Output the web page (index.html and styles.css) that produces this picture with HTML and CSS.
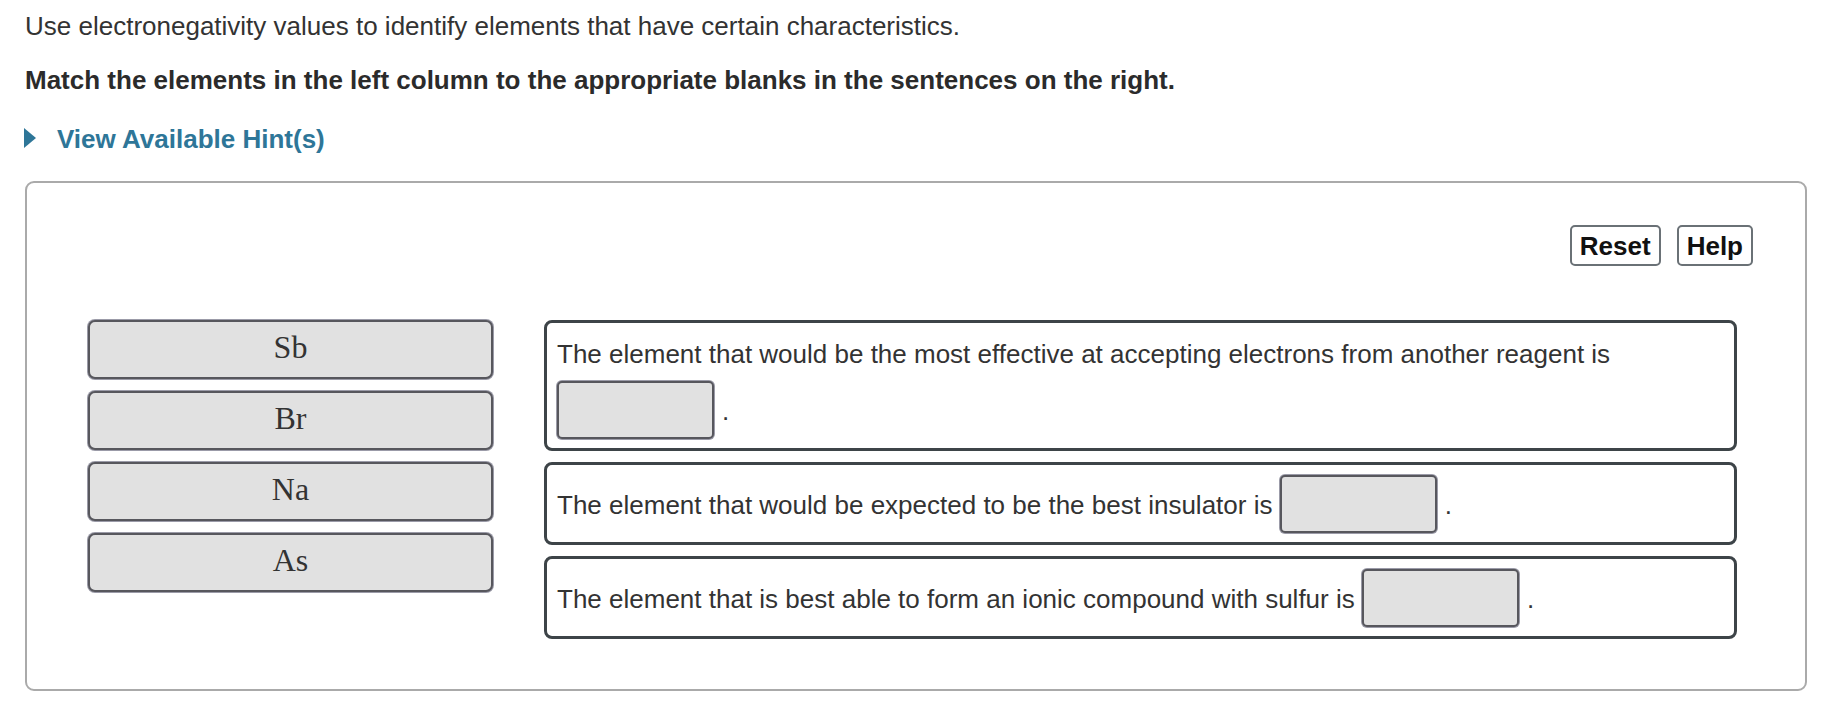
FILE: index.html
```html
<!DOCTYPE html>
<html lang="en">
<head>
<meta charset="utf-8">
<title>Electronegativity matching</title>
<link rel="stylesheet" href="styles.css">
</head>
<body>
<div class="page">
  <p class="intro">Use electronegativity values to identify elements that have certain characteristics.</p>
  <p class="instruction">Match the elements in the left column to the appropriate blanks in the sentences on the right.</p>
  <div class="hint">
    <svg class="hint-arrow" width="12" height="20" viewBox="0 0 12 20" aria-hidden="true"><polygon points="0,0 12,10 0,20" fill="#2e7698"/></svg>
    <span class="hint-label">View Available Hint(s)</span>
  </div>
  <div class="panel">
    <div class="toolbar">
      <button class="tool-btn">Reset</button>
      <button class="tool-btn">Help</button>
    </div>
    <div class="match">
      <div class="choices">
        <div class="choice">Sb</div>
        <div class="choice">Br</div>
        <div class="choice">Na</div>
        <div class="choice">As</div>
      </div>
      <div class="sentences">
        <div class="sentence">The element that would be the most effective at accepting electrons from another reagent is <span class="blank"></span>.</div>
        <div class="sentence">The element that would be expected to be the best insulator is <span class="blank"></span>.</div>
        <div class="sentence">The element that is best able to form an ionic compound with sulfur is <span class="blank"></span>.</div>
      </div>
    </div>
  </div>
</div>
</body>
</html>
```

FILE: styles.css
```css
body {
  margin: 0;
  font-family: "Liberation Sans", Arial, Helvetica, sans-serif;
  font-size: 26px;
  color: #333;
  background: #fff;
}

.page {
  padding: 0 29px 0 25px;
}

.intro {
  margin: 11px 0 0;
  line-height: 30px;
}

.instruction {
  margin: 24px 0 0;
  line-height: 30px;
  font-weight: bold;
  color: #2b2b2b;
}

.hint {
  margin-top: 29px;
  display: flex;
  align-items: center;
  height: 30px;
}

.hint-arrow {
  display: block;
  flex: none;
  margin-left: -1px;
  margin-right: 21px;
  margin-top: -3px;
}

.hint-label {
  font-weight: bold;
  color: #2e7698;
  line-height: 30px;
}

.panel {
  margin-top: 27px;
  border: 2px solid #aaa;
  border-radius: 9px;
  padding: 42px 52px 50px 60px;
}

.toolbar {
  display: flex;
  justify-content: flex-end;
  gap: 16px;
}

.tool-btn {
  font-family: "Liberation Sans", Arial, Helvetica, sans-serif;
  font-size: 26px;
  font-weight: bold;
  color: #111;
  background: #fff;
  border: 2px solid #6a7176;
  border-radius: 5px;
  height: 41px;
  line-height: 35px;
  padding: 2px 8px 0;
  margin: 0;
}

.match {
  margin-top: 54px;
  display: grid;
  grid-template-columns: 406px 1193px;
  column-gap: 51px;
  align-items: start;
}

.choices {
  display: flex;
  flex-direction: column;
  gap: 12px;
  margin-left: 1px;
}

.choice {
  font-family: "Liberation Serif", "Times New Roman", serif;
  font-size: 32px;
  line-height: 40px;
  text-align: center;
  color: #333;
  background: #e1e1e1;
  border: 2px solid #57575d;
  box-shadow: 0 0 0 1px #9b9ba8;
  border-radius: 7px;
  padding: 5px 0 10px;
}

.sentences {
  display: flex;
  flex-direction: column;
  gap: 11px;
}

.sentence {
  border: 3px solid #3d4448;
  border-radius: 8px;
  padding: 7px 10px 6px;
  line-height: 48px;
  color: #333;
}

.blank {
  display: inline-block;
  width: 153px;
  height: 54px;
  margin: 3px 8px 3px 0;
  vertical-align: -22px;
  background: #e1e1e1;
  border: 2px solid #57575d;
  box-shadow: 0 0 0 1px #9b9ba8;
  border-radius: 5px;
}
```
